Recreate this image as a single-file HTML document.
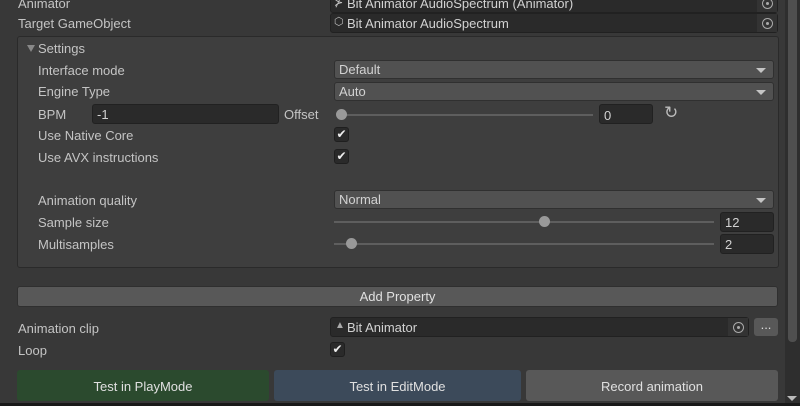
<!DOCTYPE html>
<html><head><style>
*{box-sizing:border-box;margin:0;padding:0}
body{width:800px;height:406px;background:#383838;font-family:"Liberation Sans",sans-serif;font-size:13px;color:#c4c4c4;position:relative;overflow:hidden}
.a{position:absolute}
.lbl{position:absolute;line-height:16px;margin-top:1px}
.obj{position:absolute;background:#2a2a2a;border:1px solid #212121;border-radius:3px;height:20px;line-height:19px;padding-left:16px;color:#d2d2d2}
.pick{position:absolute;right:0;top:0;width:20px;height:18px;background:#333}
.pick:after{content:"";position:absolute;left:5px;top:4px;width:9px;height:9px;border:1.5px solid #aaa;border-radius:50%}
.pick:before{content:"";position:absolute;left:8.5px;top:7.5px;width:3px;height:3px;background:#aaa;border-radius:50%}
.dd{position:absolute;left:334px;width:440px;height:19px;background:#515151;border:1px solid #303030;border-radius:3px;line-height:18px;padding-left:4px;color:#d2d2d2}
.dd:after{content:"";position:absolute;right:7px;top:7px;border-left:5px solid transparent;border-right:5px solid transparent;border-top:5px solid #c4c4c4}
.tf{position:absolute;background:#2a2a2a;border:1px solid #212121;border-radius:3px;height:20px;line-height:20px;padding-left:4px;color:#d2d2d2}
.track{position:absolute;height:2px;background:#5e5e5e}
.knob{position:absolute;width:11px;height:11px;border-radius:50%;background:#999}
.cb{position:absolute;width:15px;height:15px;background:#2a2a2a;border:1px solid #1f1f1f;border-radius:3px;color:#eee;font-size:12px;line-height:13px;text-align:center}
.btn{position:absolute;height:31px;border-radius:3px;line-height:33px;text-align:center;color:#e0e0e0}
</style></head><body>
<div class="lbl" style="left:18px;top:-5px">Animator</div>
<div class="obj" style="left:330px;top:-7px;width:448px">Bit Animator AudioSpectrum (Animator)<div class="pick"></div></div>
<div class="a" style="left:334px;top:-4px;font-size:11px">⊁</div>
<div class="lbl" style="left:18px;top:15px">Target GameObject</div>
<div class="obj" style="left:330px;top:13px;width:448px">Bit Animator AudioSpectrum<div class="pick"></div></div>
<div class="a" style="left:334px;top:15px;font-size:11px;color:#bbb">⬡</div>

<div class="a" style="left:17px;top:36px;width:762px;height:232px;background:#3e3e3e;border:1px solid #2a2a2a;border-radius:3px"></div>
<div class="a" style="left:27px;top:45px;border-left:4px solid transparent;border-right:4px solid transparent;border-top:7px solid #888"></div>
<div class="lbl" style="left:38px;top:40px">Settings</div>
<div class="lbl" style="left:38px;top:62px">Interface mode</div>
<div class="dd" style="top:60px">Default</div>
<div class="lbl" style="left:38px;top:83px">Engine Type</div>
<div class="dd" style="top:82px">Auto</div>
<div class="lbl" style="left:38px;top:106px">BPM</div>
<div class="tf" style="left:92px;top:104px;width:187px">-1</div>
<div class="lbl" style="left:284px;top:106px">Offset</div>
<div class="track" style="left:339px;top:114px;width:254px"></div>
<div class="knob" style="left:336px;top:109px"></div>
<div class="tf" style="left:599px;top:104px;width:54px;line-height:22px">0</div>
<div class="a" style="left:664px;top:103px;font-size:17px;color:#bbb">↻</div>
<div class="lbl" style="left:38px;top:127px">Use Native Core</div>
<div class="cb" style="left:334px;top:127px">✔</div>
<div class="lbl" style="left:38px;top:149px">Use AVX instructions</div>
<div class="cb" style="left:334px;top:149px">✔</div>
<div class="lbl" style="left:38px;top:192px">Animation quality</div>
<div class="dd" style="top:190px">Normal</div>
<div class="lbl" style="left:38px;top:214px">Sample size</div>
<div class="track" style="left:334px;top:221px;width:380px"></div>
<div class="knob" style="left:539px;top:216px"></div>
<div class="tf" style="left:720px;top:212px;width:54px">12</div>
<div class="lbl" style="left:38px;top:236px">Multisamples</div>
<div class="track" style="left:334px;top:243px;width:380px"></div>
<div class="knob" style="left:346px;top:238px"></div>
<div class="tf" style="left:720px;top:234px;width:54px">2</div>

<div class="a" style="left:17px;top:286px;width:761px;height:21px;background:#585858;border:1px solid #2f2f2f;border-radius:3px;line-height:20px;text-align:center;color:#e0e0e0">Add Property</div>
<div class="lbl" style="left:18px;top:320px">Animation clip</div>
<div class="obj" style="left:330px;top:317px;width:419px">Bit Animator<div class="pick"></div></div>
<div class="a" style="left:335px;top:320px;font-size:10px;color:#aaa">▲</div>
<div class="a" style="left:754px;top:318px;width:24px;height:18px;background:#585858;border-radius:3px;text-align:center;line-height:14px;color:#ddd">...</div>
<div class="lbl" style="left:18px;top:342px">Loop</div>
<div class="cb" style="left:330px;top:342px">✔</div>

<div class="btn" style="left:17px;top:370px;width:252px;background:#2b4a2e">Test in PlayMode</div>
<div class="btn" style="left:274px;top:370px;width:247px;background:#3c4a5a">Test in EditMode</div>
<div class="btn" style="left:526px;top:370px;width:252px;background:#585858">Record animation</div>

<div class="a" style="left:785px;top:0;width:15px;height:406px;background:#2e2e2e"></div>
<div class="a" style="left:788px;top:-5px;width:9px;height:347px;background:#4f4f4f;border-radius:4px"></div>
<div class="a" style="left:787px;top:396px;border-left:5px solid transparent;border-right:5px solid transparent;border-top:5px solid #bbb"></div>
<div class="a" style="left:0;top:403px;width:800px;height:3px;background:#191919"></div>
</body></html>
